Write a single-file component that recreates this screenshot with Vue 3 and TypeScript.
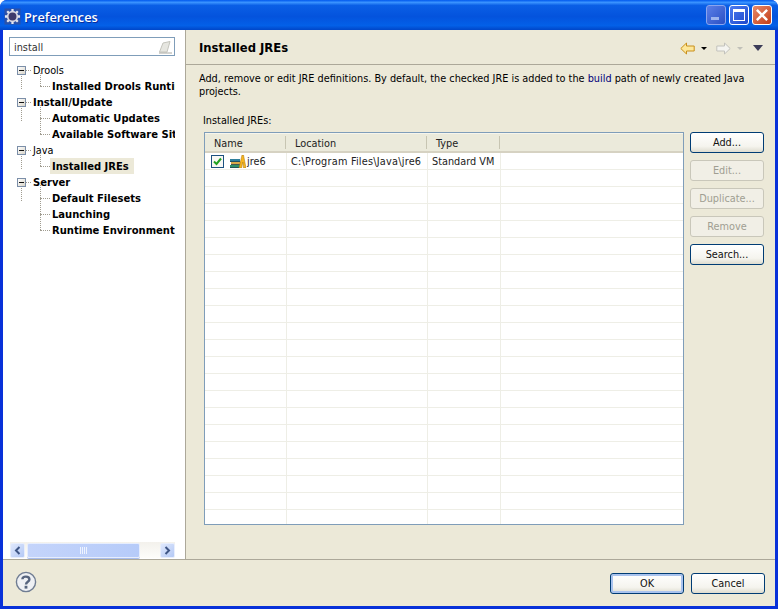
<script setup lang="ts">
interface TreeRow { label: string; level: number; bold: boolean; selected?: boolean; last?: boolean }
const tree: TreeRow[] = [
  { label: 'Drools', level: 0, bold: false },
  { label: 'Installed Drools Runtimes', level: 1, bold: true, last: true },
  { label: 'Install/Update', level: 0, bold: true },
  { label: 'Automatic Updates', level: 1, bold: true },
  { label: 'Available Software Sites', level: 1, bold: true, last: true },
  { label: 'Java', level: 0, bold: false },
  { label: 'Installed JREs', level: 1, bold: true, selected: true, last: true },
  { label: 'Server', level: 0, bold: true },
  { label: 'Default Filesets', level: 1, bold: true },
  { label: 'Launching', level: 1, bold: true },
  { label: 'Runtime Environment', level: 1, bold: true, last: true },
]
const sideButtons = [
  { label: 'Add...', disabled: false },
  { label: 'Edit...', disabled: true },
  { label: 'Duplicate...', disabled: true },
  { label: 'Remove', disabled: true },
  { label: 'Search...', disabled: false },
]
const emptyRows = Array.from({ length: 21 }, (_, i) => i)
</script>

<template>
  <div class="page">
    <div class="window">
      <header class="titlebar">
        <svg class="app-icon" width="17" height="17" viewBox="0 0 18 18">
          <rect x="0.5" y="0.5" width="17" height="17" fill="#4a4a78" opacity="0.55" />
          <g stroke="#e8e8f0" stroke-width="2.4">
            <line x1="9" y1="1" x2="9" y2="17" />
            <line x1="1" y1="9" x2="17" y2="9" />
            <line x1="3.4" y1="3.4" x2="14.6" y2="14.6" />
            <line x1="14.6" y1="3.4" x2="3.4" y2="14.6" />
          </g>
          <circle cx="9" cy="9" r="6" fill="#d8d8e4" />
          <circle cx="9" cy="9" r="4.2" fill="#3e3a6c" />
        </svg>
        <span class="title">Preferences</span>
        <div class="caption-buttons">
          <div class="cap cap-min"><span class="min-bar"></span></div>
          <div class="cap cap-max"><span class="max-box"></span></div>
          <div class="cap cap-close">
            <svg width="14" height="14" viewBox="0 0 15 15">
              <path d="M2 2 L13 13 M13 2 L2 13" stroke="#fff" stroke-width="2.6" />
            </svg>
          </div>
        </div>
      </header>

      <div class="client">
        <div class="main">
          <aside class="left">
            <div class="filter">
              <span class="filter-text">install</span>
              <svg width="15" height="14" viewBox="0 0 15 14">
                <path d="M1.5 12 L5 3 L12 1.5 L9 12 Z" fill="#e6e6e0" stroke="#c4c4bc" />
                <path d="M1 13 H14" stroke="#a8a8a0" />
              </svg>
            </div>
            <div class="tree">
              <div
                v-for="row in tree"
                :key="row.label"
                class="tree-row"
                :class="[row.level === 0 ? 'root' : 'child', { last: row.last }]"
              >
                <span v-if="row.level === 0" class="toggle"><i></i></span>
                <span v-if="row.level === 0" class="h-dots short"></span>
                <span v-else class="h-dots long"></span>
                <span class="tree-label" :class="{ bold: row.bold, selected: row.selected }">{{ row.label }}</span>
              </div>
            </div>
            <div class="hscroll">
              <span class="sb-btn">
                <svg width="9" height="9" viewBox="0 0 9 9"><path d="M6.5 1 L3 4.5 L6.5 8" fill="none" stroke="#3f5685" stroke-width="2" /></svg>
              </span>
              <div class="sb-track">
                <div class="sb-thumb">
                  <svg width="8" height="7" viewBox="0 0 8 7"><path d="M0.5 0V7M2.5 0V7M4.5 0V7M6.5 0V7" stroke="#eef3ff" /></svg>
                </div>
              </div>
              <span class="sb-btn">
                <svg width="9" height="9" viewBox="0 0 9 9"><path d="M2.5 1 L6 4.5 L2.5 8" fill="none" stroke="#3f5685" stroke-width="2" /></svg>
              </span>
            </div>
          </aside>

          <section class="right">
            <div class="page-head">
              <h1>Installed JREs</h1>
              <div class="nav">
                <svg width="15" height="13" viewBox="0 0 15 13">
                  <path d="M0.8 6.5 L6.5 1 V4 H14.2 V9 H6.5 V12 Z" fill="#fde79a" stroke="#c98f1a" stroke-linejoin="round" />
                </svg>
                <i class="tri dark small first"></i>
                <svg class="fwd" width="15" height="13" viewBox="0 0 15 13">
                  <path d="M14.2 6.5 L8.5 1 V4 H0.8 V9 H8.5 V12 Z" fill="#f4f4f0" stroke="#c2c2bc" stroke-linejoin="round" />
                </svg>
                <i class="tri light small first"></i>
                <i class="tri menu"></i>
              </div>
            </div>
            <div class="page-body">
              <p class="desc">Add, remove or edit JRE definitions. By default, the checked JRE is added to the <span class="link">build</span> path of newly created Java projects.</p>
              <div class="group-label">Installed JREs:</div>
              <div class="table-area">
                <div class="table">
                  <div class="thead">
                    <div class="th c1">Name</div>
                    <div class="th c2">Location</div>
                    <div class="th c3">Type</div>
                    <div class="th c4"></div>
                  </div>
                  <div class="tr">
                    <div class="td c1 name-cell">
                      <span class="check">
                        <svg width="9" height="9" viewBox="0 0 9 9"><path d="M1 4.5 L3.5 7 L8 1.5" fill="none" stroke="#21a121" stroke-width="2" /></svg>
                      </span>
                      <svg class="jre-icon" width="16" height="13" viewBox="0 0 16 13">
                        <rect x="0" y="10" width="11" height="3" fill="#2f8f68" />
                        <rect x="1" y="7" width="10" height="3" fill="#d8a848" />
                        <rect x="0" y="4" width="10" height="3" fill="#2f7f9c" />
                        <path d="M0 6.5H10M1 9.5H11M0 12.5H11" stroke="#1e4452" stroke-width="0.8" />
                        <path d="M9 13 L12 0 H13.5 L16 13 H13.6 L12.8 7 L11.6 13 Z" fill="#f6b620" stroke="#a87410" stroke-width="0.5" />
                      </svg>
                      <span>jre6</span>
                    </div>
                    <div class="td c2 location">C:\Program Files\Java\jre6</div>
                    <div class="td c3">Standard VM</div>
                    <div class="td c4"></div>
                  </div>
                  <div v-for="i in emptyRows" :key="i" class="tr">
                    <div class="td c1"></div>
                    <div class="td c2"></div>
                    <div class="td c3"></div>
                    <div class="td c4"></div>
                  </div>
                </div>
                <div class="side-buttons">
                  <button v-for="b in sideButtons" :key="b.label" class="btn" :class="{ disabled: b.disabled }">{{ b.label }}</button>
                </div>
              </div>
            </div>
          </section>
        </div>

        <footer class="footer">
          <svg class="help" width="22" height="22" viewBox="0 0 22 22">
            <circle cx="11" cy="11" r="9.6" fill="#eef0f4" stroke="#6f7c92" stroke-width="1.4" />
            <path d="M7.4 8.2 C7.6 4.8 14.4 4.8 14.4 8.4 C14.4 10.8 11 10.6 11 13.4" fill="none" stroke="#56647e" stroke-width="2.4" />
            <rect x="9.6" y="14.8" width="2.8" height="2.8" fill="#56647e" />
          </svg>
          <div class="footer-buttons">
            <button class="btn default">OK</button>
            <button class="btn">Cancel</button>
          </div>
        </footer>
      </div>
    </div>
  </div>
</template>

<style>
html, body { margin: 0; background: #fff; }
</style>

<style scoped>
.page {
  width: 783px;
  height: 613px;
  background: #fff;
  overflow: hidden;
  font-family: "DejaVu Sans", Tahoma, sans-serif;
  font-stretch: condensed;
  font-size: 10.8px;
  color: #000;
}
.window {
  width: 778px;
  height: 609px;
  display: flex;
  flex-direction: column;
  background: #0831d9;
  border-radius: 7px 7px 0 0;
  overflow: hidden;
}
.titlebar {
  height: 30px;
  flex: none;
  display: flex;
  align-items: center;
  padding: 3px 4px 0;
  box-sizing: border-box;
  background: linear-gradient(180deg, #0058ee 0%, #3a93ff 8%, #0a5fe6 18%, #0453dd 55%, #0360e8 85%, #0046c8 100%);
}
.app-icon { margin-right: 3px; flex: none; }
.title {
  color: #fff;
  font-family: "Open Sans", "DejaVu Sans", sans-serif;
  font-stretch: normal;
  font-weight: 600;
  font-size: 12.8px;
  text-shadow: 1px 1px 0 #0a2f9c;
}
.caption-buttons { margin-left: auto; margin-top: -3px; display: flex; gap: 3px; padding-right: 2px; }
.cap {
  width: 20px;
  height: 20px;
  box-sizing: border-box;
  border: 1px solid #fff;
  border-radius: 3px;
  display: flex;
  align-items: center;
  justify-content: center;
}
.cap-min { background: linear-gradient(135deg, #5b7fe8, #2a50c4); border-color: #8aa4ee; }
.min-bar { width: 8px; height: 3px; background: #9db4ee; margin-top: 7px; margin-right: 2px; }
.cap-max { background: linear-gradient(135deg, #4c7cf0, #1e48cc); }
.max-box { width: 10px; height: 8px; border: 1px solid #fff; border-top-width: 3px; }
.cap-close { background: linear-gradient(135deg, #e88a6a, #c33d18); }

.client {
  flex: 1;
  min-height: 0;
  margin: 0 3px 3px;
  display: flex;
  flex-direction: column;
  background: #ece9d8;
}
.main { flex: 1; min-height: 0; display: flex; }
.left {
  width: 183px;
  flex: none;
  box-sizing: border-box;
  background: #fff;
  padding: 7px 10px 0 6px;
  display: flex;
  flex-direction: column;
  border-right: 1px solid #aca899;
}
.filter {
  height: 19px;
  flex: none;
  box-sizing: border-box;
  border: 1px solid #7f9db9;
  display: flex;
  align-items: center;
  justify-content: space-between;
  padding: 0 1px 0 4px;
  color: #333;
}
.filter-text { padding-top: 1px; }
.tree { flex: 1; min-height: 0; overflow: hidden; padding-top: 6px; }
.tree-row {
  height: 16px;
  display: flex;
  align-items: center;
  white-space: nowrap;
  position: relative;
}
.tree-row.root { padding-left: 8px; }
.tree-row.root::before {
  content: "";
  position: absolute;
  left: 12px;
  top: 11px;
  height: 16px;
  border-left: 1px dotted #a09c90;
}
.tree-row.root.last::before { display: none; }
.tree-row.child { padding-left: 31px; }
.tree-row.child::before {
  content: "";
  position: absolute;
  left: 31px;
  top: -5px;
  height: 13px;
  border-left: 1px dotted #a09c90;
}
.tree-row.child:not(.last)::after {
  content: "";
  position: absolute;
  left: 31px;
  top: 8px;
  height: 8px;
  border-left: 1px dotted #a09c90;
}
.toggle {
  width: 9px;
  height: 9px;
  flex: none;
  box-sizing: border-box;
  border: 1px solid #7b8ea8;
  background: linear-gradient(135deg, #fff, #d8d4c8);
  display: flex;
  align-items: center;
  justify-content: center;
  position: relative;
  z-index: 1;
}
.toggle i { width: 5px; height: 1px; background: #111; display: block; }
.h-dots { flex: none; height: 0; border-top: 1px dotted #a09c90; }
.h-dots.short { width: 5px; margin-right: 2px; }
.h-dots.long { width: 10px; margin-left: 0; }
.tree-label { display: block; height: 16px; padding: 0 5px 0 2px; line-height: 18px; }
.tree-row.root .tree-label { padding-left: 0; }
.bold { font-weight: 700; font-stretch: normal; font-size: 10px; }
.selected { background: #ece9d8; }
.hscroll {
  height: 16px;
  flex: none;
  margin: 0 0 1px 1px;
  display: flex;
  align-items: center;
  background: linear-gradient(180deg, #f3f1ec, #fdfdfa);
}
.sb-btn {
  width: 15px;
  height: 15px;
  flex: none;
  box-sizing: border-box;
  border: 1px solid #e8eefc;
  border-radius: 2px;
  background: linear-gradient(135deg, #dfe8fd, #b4c9f5);
  display: flex;
  align-items: center;
  justify-content: center;
}
.sb-track { flex: 1; height: 15px; padding: 0 20px 0 2px; box-sizing: border-box; display: flex; }
.sb-thumb {
  flex: 1;
  box-sizing: border-box;
  border: 1px solid #e6edfd;
  border-radius: 2px;
  background: linear-gradient(90deg, #c4d4fb, #b6cbf9);
  box-shadow: 0 1px 0 #a9bdec;
  display: flex;
  align-items: center;
  justify-content: center;
}

.right { flex: 1; min-width: 0; display: flex; flex-direction: column; }
.page-head {
  height: 35px;
  flex: none;
  box-sizing: border-box;
  border-bottom: 1px solid #aca899;
  padding: 0 12px 0 13px;
  display: flex;
  align-items: center;
  justify-content: space-between;
}
h1 { margin: 0; font-size: 11.6px; font-weight: 700; font-stretch: normal; line-height: 1; padding-top: 4px; }
.nav { display: flex; align-items: center; height: 14px; margin-top: 2px; }
.tri {
  display: block;
  width: 0;
  height: 0;
  border-style: solid;
  border-color: transparent;
  border-bottom-width: 0;
}
.tri.small { border-left-width: 3px; border-right-width: 3px; border-top-width: 3px; }
.tri.first { margin-left: 6px; }
.tri.dark { border-top-color: #000; }
.tri.light { border-top-color: #c0c0b8; }
.tri.menu { border-left-width: 5px; border-right-width: 5px; border-top-width: 6px; border-top-color: #3c3c58; margin-left: 10px; }
.fwd { margin-left: 9px; }
.page-body { flex: 1; min-height: 0; padding: 7px 11px 0 13px; display: flex; flex-direction: column; }
.desc { margin: 0; line-height: 13px; width: 560px; }
.link { color: #00007a; }
.group-label { margin: 16px 0 0 4px; line-height: 13px; height: 13px; }
.table-area { display: flex; margin: 5px 0 0 5px; gap: 6px; }
.table {
  width: 480px;
  height: 393px;
  box-sizing: border-box;
  border: 1px solid #7f9db9;
  background: #fff;
  overflow: hidden;
}
.thead { display: flex; height: 20px; box-sizing: border-box; background: #ebeadb; border-top: 1px solid #f6f5ec; border-bottom: 2px solid #d6d2c2; }
.th { box-sizing: border-box; line-height: 17px; padding: 1px 0 0 9px; position: relative; color: #222; }
.th::after {
  content: "";
  position: absolute;
  right: 1px;
  top: 2px;
  height: 13px;
  width: 1px;
  background: #c7c5b2;
}
.th.c4::after { display: none; }
.c1 { width: 82px; flex: none; }
.c2 { width: 141px; flex: none; }
.c3 { width: 73px; flex: none; }
.c4 { flex: 1; }
.th.c2, .th.c3 { padding-left: 8px; }
.tr { display: flex; height: 17px; box-sizing: border-box; border-bottom: 1px solid #eeeee6; }
.td { box-sizing: border-box; line-height: 17px; padding-left: 4px; border-right: 1px solid #eeeee6; white-space: nowrap; color: #222; }
.td.c4 { border-right: none; }
.location { letter-spacing: 0.23px; }
.name-cell { display: flex; align-items: center; padding-left: 6px; }
.check {
  width: 13px;
  height: 13px;
  box-sizing: border-box;
  border: 1px solid #1c5180;
  display: flex;
  align-items: center;
  justify-content: center;
  background: #f8f8f4;
  flex: none;
}
.jre-icon { margin-left: 6px; margin-right: 1px; flex: none; }
.side-buttons { display: flex; flex-direction: column; gap: 7px; }
.btn {
  width: 74px;
  height: 21px;
  padding: 0;
  box-sizing: border-box;
  border: 1px solid #003c74;
  border-radius: 3px;
  background: linear-gradient(180deg, #fff 0%, #f5f4ee 70%, #dedccf 100%);
  font: inherit;
  font-stretch: condensed;
  color: #111;
}
.btn.disabled {
  border-color: #c9c7ba;
  background: #f1efe6;
  color: #a09e92;
}
.footer {
  height: 47px;
  flex: none;
  box-sizing: border-box;
  border-top: 1px solid #aca899;
  display: flex;
  align-items: center;
  padding: 0 10px 0 12px;
  justify-content: space-between;
}
.help { margin-top: -2px; }
.footer-buttons { display: flex; gap: 7px; }
.btn.default { box-shadow: inset 0 0 0 2px #a9c3ee; }
</style>
